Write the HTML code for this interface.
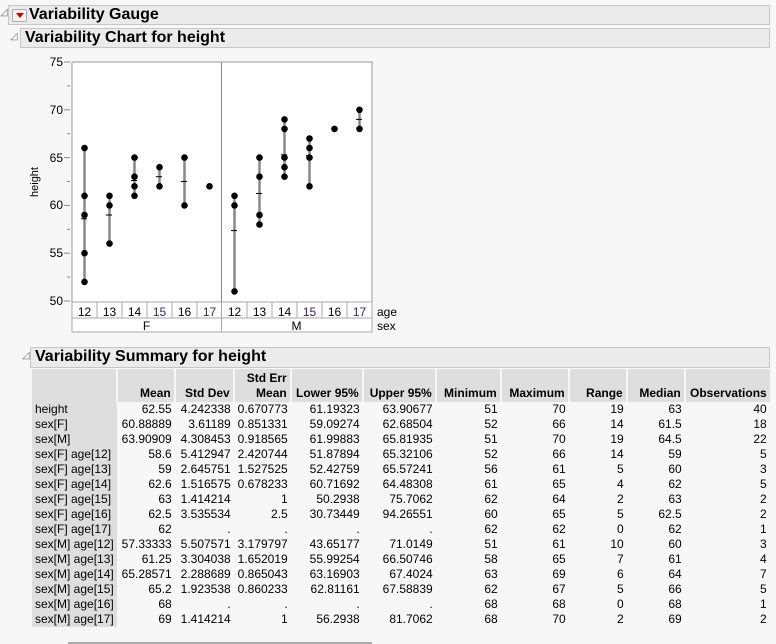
<!DOCTYPE html>
<html><head><meta charset="utf-8"><style>
body{margin:0;width:776px;height:644px;background:#f7f7f7;font-family:"Liberation Sans",sans-serif;position:relative;overflow:hidden;color:#000}
.bar{position:absolute;background:#ebebeb;border:1px solid #c6c6c6;font-weight:bold;font-size:16px;line-height:18px;padding-left:4px;box-sizing:border-box}
.tri{position:absolute;font-size:10px;color:#777}
table{position:absolute;left:32px;top:369px;border-collapse:collapse;font-size:12px;table-layout:fixed}
td{padding:0 3px 0 0;text-align:right;height:15px;line-height:15px;white-space:nowrap}
td:first-child{text-align:left;padding-left:3px;background:#dedede}
tr.h td{background:#dedede;font-weight:bold;border-left:2px solid #f7f7f7;vertical-align:bottom;height:32px;line-height:15px;padding-bottom:1px}
tr.h td:first-child{border-left:none}
</style></head><body>
<div class="tri" style="left:0;top:7px">◿</div>
<div class="bar" style="left:8px;top:5px;width:762px;height:20px;padding-left:20px">Variability Gauge</div>
<div style="position:absolute;left:12px;top:9px;width:13px;height:11px;border:1px solid #aaa;background:#f3f3f3;border-radius:2px"><div style="margin:3px auto 0;width:0;height:0;border-left:4px solid transparent;border-right:4px solid transparent;border-top:5px solid #c00"></div></div>
<div class="tri" style="left:10px;top:31px">◿</div>
<div class="bar" style="left:20px;top:28px;width:750px;height:20px">Variability Chart for height</div>

<svg style="position:absolute;left:0;top:0" width="776" height="644" font-family="Liberation Sans, sans-serif" font-size="12">
<rect x="72" y="62" width="300" height="240" fill="#fff" stroke="#999"/>
<line x1="221.5" y1="62" x2="221.5" y2="302" stroke="#888"/>
<g stroke="#888">
<line x1="64" y1="62" x2="70" y2="62"/><line x1="64" y1="109.8" x2="70" y2="109.8"/><line x1="64" y1="157.6" x2="70" y2="157.6"/><line x1="64" y1="205.4" x2="70" y2="205.4"/><line x1="64" y1="253.2" x2="70" y2="253.2"/><line x1="64" y1="301" x2="70" y2="301"/>
<line x1="67" y1="85.9" x2="70" y2="85.9"/><line x1="67" y1="133.7" x2="70" y2="133.7"/><line x1="67" y1="181.5" x2="70" y2="181.5"/><line x1="67" y1="229.3" x2="70" y2="229.3"/><line x1="67" y1="277.1" x2="70" y2="277.1"/>
</g>
<g text-anchor="end"><text x="63" y="66">75</text><text x="63" y="114">70</text><text x="63" y="162">65</text><text x="63" y="209">60</text><text x="63" y="257">55</text><text x="63" y="305">50</text></g>
<text transform="translate(38,182) rotate(-90)" text-anchor="middle" font-size="11">height</text>
<g stroke="#888" stroke-width="2.5">
<line x1="84.5" y1="148" x2="84.5" y2="281.9"/>
<line x1="109.5" y1="195.8" x2="109.5" y2="243.6"/>
<line x1="134.5" y1="157.6" x2="134.5" y2="195.8"/>
<line x1="159.5" y1="167.2" x2="159.5" y2="186.3"/>
<line x1="184.5" y1="157.6" x2="184.5" y2="205.4"/>
<line x1="234.5" y1="195.8" x2="234.5" y2="291.4"/>
<line x1="259.5" y1="157.6" x2="259.5" y2="224.5"/>
<line x1="284.5" y1="119.4" x2="284.5" y2="176.7"/>
<line x1="309.5" y1="138.5" x2="309.5" y2="186.3"/>
<line x1="359.5" y1="109.8" x2="359.5" y2="128.9"/>
</g>
<g stroke="#000" stroke-width="1">
<line x1="81" y1="218.8" x2="87" y2="218.8"/><line x1="106" y1="215" x2="112" y2="215"/><line x1="131" y1="180.5" x2="137" y2="180.5"/><line x1="156" y1="176.7" x2="162" y2="176.7"/><line x1="181" y1="181.5" x2="187" y2="181.5"/><line x1="231" y1="230.6" x2="237" y2="230.6"/><line x1="256" y1="193.5" x2="262" y2="193.5"/><line x1="281" y1="154.8" x2="287" y2="154.8"/><line x1="306" y1="155.7" x2="312" y2="155.7"/><line x1="356" y1="119.4" x2="362" y2="119.4"/>
</g>
<g fill="#000">
<circle cx="84.5" cy="148" r="3.3"/><circle cx="84.5" cy="195.8" r="3.3"/><circle cx="84.5" cy="215" r="3.3"/><circle cx="84.5" cy="253.2" r="3.3"/><circle cx="84.5" cy="281.9" r="3.3"/>
<circle cx="109.5" cy="195.8" r="3.3"/><circle cx="109.5" cy="205.4" r="3.3"/><circle cx="109.5" cy="243.6" r="3.3"/>
<circle cx="134.5" cy="157.6" r="3.3"/><circle cx="134.5" cy="176.7" r="3.3"/><circle cx="134.5" cy="186.3" r="3.3"/><circle cx="134.5" cy="195.8" r="3.3"/>
<circle cx="159.5" cy="167.2" r="3.3"/><circle cx="159.5" cy="186.3" r="3.3"/>
<circle cx="184.5" cy="157.6" r="3.3"/><circle cx="184.5" cy="205.4" r="3.3"/>
<circle cx="209.5" cy="186.3" r="3.3"/>
<circle cx="234.5" cy="195.8" r="3.3"/><circle cx="234.5" cy="205.4" r="3.3"/><circle cx="234.5" cy="291.4" r="3.3"/>
<circle cx="259.5" cy="157.6" r="3.3"/><circle cx="259.5" cy="176.7" r="3.3"/><circle cx="259.5" cy="215" r="3.3"/><circle cx="259.5" cy="224.5" r="3.3"/>
<circle cx="284.5" cy="119.4" r="3.3"/><circle cx="284.5" cy="128.9" r="3.3"/><circle cx="284.5" cy="157.6" r="3.3"/><circle cx="284.5" cy="167.2" r="3.3"/><circle cx="284.5" cy="176.7" r="3.3"/>
<circle cx="309.5" cy="138.5" r="3.3"/><circle cx="309.5" cy="148" r="3.3"/><circle cx="309.5" cy="157.6" r="3.3"/><circle cx="309.5" cy="186.3" r="3.3"/>
<circle cx="334.5" cy="128.9" r="3.3"/>
<circle cx="359.5" cy="109.8" r="3.3"/><circle cx="359.5" cy="128.9" r="3.3"/>
</g>
<rect x="72" y="302" width="300" height="30" fill="#fff" stroke="#aaa"/>
<line x1="72" y1="318" x2="372" y2="318" stroke="#aaa"/>
<line x1="221.5" y1="302" x2="221.5" y2="332" stroke="#aaa"/>
<g stroke="#aaa"><line x1="97" y1="302" x2="97" y2="318"/><line x1="122" y1="302" x2="122" y2="318"/><line x1="147" y1="302" x2="147" y2="318"/><line x1="172" y1="302" x2="172" y2="318"/><line x1="197" y1="302" x2="197" y2="318"/><line x1="247" y1="302" x2="247" y2="318"/><line x1="272" y1="302" x2="272" y2="318"/><line x1="297" y1="302" x2="297" y2="318"/><line x1="322" y1="302" x2="322" y2="318"/><line x1="347" y1="302" x2="347" y2="318"/></g>
<g text-anchor="middle"><text x="84.5" y="316">12</text><text x="109.5" y="316">13</text><text x="134.5" y="316">14</text><text x="159.5" y="316" fill="#402060">15</text><text x="184.5" y="316">16</text><text x="209.5" y="316" fill="#402060">17</text><text x="234.5" y="316">12</text><text x="259.5" y="316">13</text><text x="284.5" y="316">14</text><text x="309.5" y="316" fill="#402060">15</text><text x="334.5" y="316">16</text><text x="359.5" y="316" fill="#402060">17</text>
<text x="146.5" y="330">F</text><text x="296.5" y="330">M</text></g>
<text x="377" y="316">age</text><text x="377" y="330">sex</text>
<line x1="68" y1="643" x2="372" y2="643" stroke="#aaa" stroke-width="2"/>
</svg>

<div class="tri" style="left:22px;top:350px">◿</div>
<div class="bar" style="left:30px;top:347px;width:740px;height:21px">Variability Summary for height</div>

<table>
<colgroup><col style="width:83px"><col style="width:58px"><col style="width:59px"><col style="width:57px"><col style="width:72px"><col style="width:73px"><col style="width:65px"><col style="width:68px"><col style="width:58px"><col style="width:58px"><col style="width:85px"></colgroup>
<tr class="h"><td></td><td>Mean</td><td>Std Dev</td><td>Std Err<br>Mean</td><td>Lower 95%</td><td>Upper 95%</td><td>Minimum</td><td>Maximum</td><td>Range</td><td>Median</td><td>Observations</td></tr>
<tr><td>height</td><td>62.55</td><td>4.242338</td><td>0.670773</td><td>61.19323</td><td>63.90677</td><td>51</td><td>70</td><td>19</td><td>63</td><td>40</td></tr>
<tr><td>sex[F]</td><td>60.88889</td><td>3.61189</td><td>0.851331</td><td>59.09274</td><td>62.68504</td><td>52</td><td>66</td><td>14</td><td>61.5</td><td>18</td></tr>
<tr><td>sex[M]</td><td>63.90909</td><td>4.308453</td><td>0.918565</td><td>61.99883</td><td>65.81935</td><td>51</td><td>70</td><td>19</td><td>64.5</td><td>22</td></tr>
<tr><td>sex[F] age[12]</td><td>58.6</td><td>5.412947</td><td>2.420744</td><td>51.87894</td><td>65.32106</td><td>52</td><td>66</td><td>14</td><td>59</td><td>5</td></tr>
<tr><td>sex[F] age[13]</td><td>59</td><td>2.645751</td><td>1.527525</td><td>52.42759</td><td>65.57241</td><td>56</td><td>61</td><td>5</td><td>60</td><td>3</td></tr>
<tr><td>sex[F] age[14]</td><td>62.6</td><td>1.516575</td><td>0.678233</td><td>60.71692</td><td>64.48308</td><td>61</td><td>65</td><td>4</td><td>62</td><td>5</td></tr>
<tr><td>sex[F] age[15]</td><td>63</td><td>1.414214</td><td>1</td><td>50.2938</td><td>75.7062</td><td>62</td><td>64</td><td>2</td><td>63</td><td>2</td></tr>
<tr><td>sex[F] age[16]</td><td>62.5</td><td>3.535534</td><td>2.5</td><td>30.73449</td><td>94.26551</td><td>60</td><td>65</td><td>5</td><td>62.5</td><td>2</td></tr>
<tr><td>sex[F] age[17]</td><td>62</td><td>.</td><td>.</td><td>.</td><td>.</td><td>62</td><td>62</td><td>0</td><td>62</td><td>1</td></tr>
<tr><td>sex[M] age[12]</td><td>57.33333</td><td>5.507571</td><td>3.179797</td><td>43.65177</td><td>71.0149</td><td>51</td><td>61</td><td>10</td><td>60</td><td>3</td></tr>
<tr><td>sex[M] age[13]</td><td>61.25</td><td>3.304038</td><td>1.652019</td><td>55.99254</td><td>66.50746</td><td>58</td><td>65</td><td>7</td><td>61</td><td>4</td></tr>
<tr><td>sex[M] age[14]</td><td>65.28571</td><td>2.288689</td><td>0.865043</td><td>63.16903</td><td>67.4024</td><td>63</td><td>69</td><td>6</td><td>64</td><td>7</td></tr>
<tr><td>sex[M] age[15]</td><td>65.2</td><td>1.923538</td><td>0.860233</td><td>62.81161</td><td>67.58839</td><td>62</td><td>67</td><td>5</td><td>66</td><td>5</td></tr>
<tr><td>sex[M] age[16]</td><td>68</td><td>.</td><td>.</td><td>.</td><td>.</td><td>68</td><td>68</td><td>0</td><td>68</td><td>1</td></tr>
<tr><td>sex[M] age[17]</td><td>69</td><td>1.414214</td><td>1</td><td>56.2938</td><td>81.7062</td><td>68</td><td>70</td><td>2</td><td>69</td><td>2</td></tr>
</table>
</body></html>
